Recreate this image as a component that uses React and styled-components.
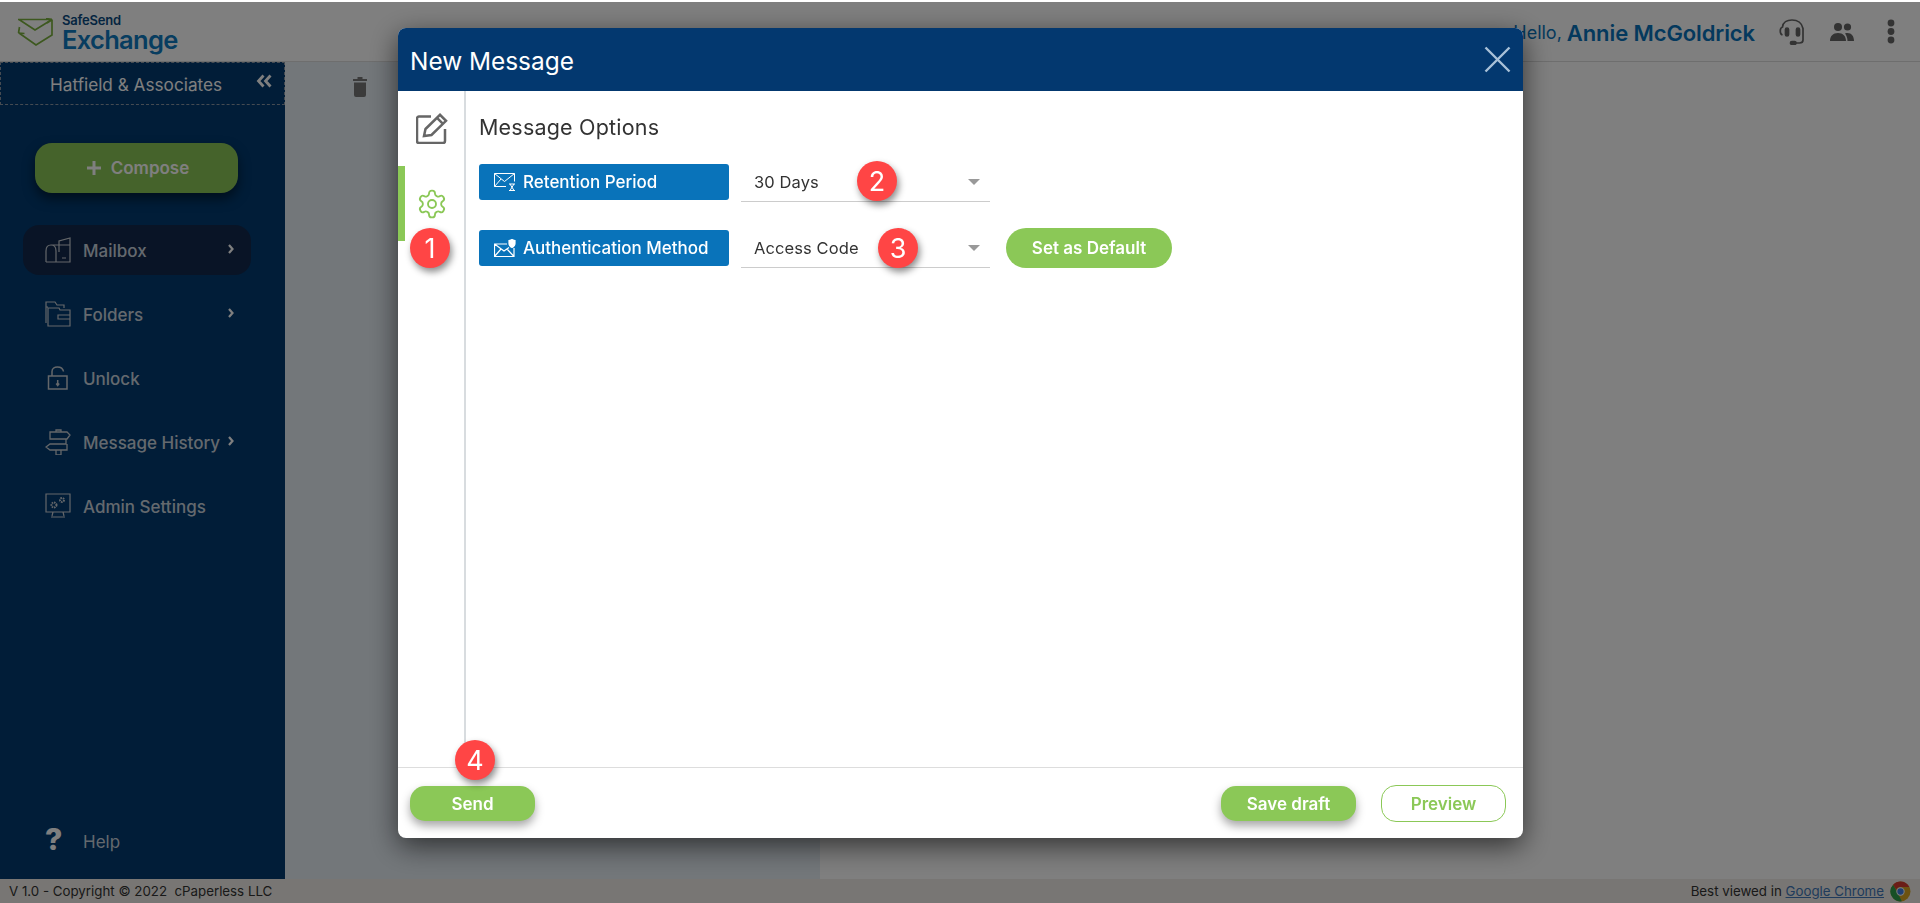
import React from "react";
import styled, { createGlobalStyle } from "styled-components";

const Global = createGlobalStyle`
  html, body { margin: 0; padding: 0; height: 100%; }
  body { font-family: "Inter", "Open Sans", sans-serif; background: #fff; overflow: hidden; }
  #root { height: 100%; }
  * { box-sizing: border-box; }
`;

const Page = styled.div`
  height: 903px; display: flex; flex-direction: column; padding-top: 2px;
  background: #fff;
`;
const TopBar = styled.header`
  height: 60px; flex: none; background: #fff; border-bottom: 1px solid #ddd;
  display: flex; align-items: center; justify-content: space-between; padding: 0 25px 0 17px;
`;
const Logo = styled.div`display: flex; align-items: center; gap: 9px;`;
const LogoText = styled.div`display: flex; flex-direction: column; margin-top: 1px;`;
const LogoTop = styled.span`font-size: 13px; font-weight: 600; line-height: 14px; letter-spacing: -.2px; color: #0a4b82;`;
const LogoBottom = styled.span`font-size: 25.5px; font-weight: 600; line-height: 25px; letter-spacing: -.7px; color: #0f7ac0;`;
const UserArea = styled.div`display: flex; align-items: center;`;
const Hello = styled.span`font-size: 18px; color: #0973ba; margin-right: 5px; padding-top: 2px;`;
const UserName = styled.span`font-size: 22px; font-weight: 600; color: #0973ba; margin-right: 24px; letter-spacing: -.1px; padding-top: 2px;`;
const TopIcon = styled.svg`display: block; color: #666; margin-left: ${p => p.$ml || 0}px;`;

const Body = styled.div`flex: 1; display: flex; min-height: 0;`;
const Sidebar = styled.aside`
  width: 285px; flex: none; background: #023a70; display: flex; flex-direction: column;
`;
const OrgBar = styled.div`
  height: 43px; flex: none; border: 1px dashed #8a97a5; display: flex; align-items: center;
  padding: 2px 0 0 49px; color: #fff; font-size: 17.2px; position: relative;
`;
const Collapse = styled.span`position: absolute; right: 12px; top: 11px; display: flex;`;
const Compose = styled.button`
  margin: 38px 47px 0 35px; height: 50px; border: none; border-radius: 17px; background: #8bc656; color: #fff;
  font: 600 17px "Inter", sans-serif; display: flex; align-items: center; justify-content: center; gap: 10px;
  box-shadow: 0 6px 12px rgba(0,0,0,.5); flex: none; padding: 0 0 0 3px;
`;
const Nav = styled.nav`margin-top: 32px; display: flex; flex-direction: column; gap: 14px; padding: 0 34px 0 23px;`;
const NavRow = styled.div`
  height: 50px; border-radius: 16px; display: flex; align-items: center; padding-left: 22px; color: #c9d3dd;
  background: ${p => p.$active ? "#12294d" : "transparent"}; font-size: 17px; font-weight: 500; position: relative;
`;
const NavLabel = styled.span`padding-top: 2px;`;
const NavIcon = styled.svg`width: 26px; height: 26px; flex: none; margin-right: 12px; color: #c9ced4;`;
const NavChevron = styled.svg`position: absolute; right: 10px; top: 14px; color: #fff;`;
const Help = styled.div`
  margin-top: auto; height: 52px; flex: none; padding-left: 45px; display: flex; align-items: flex-start; color: #c9d3dd; font-size: 17px;
`;
const HelpMark = styled.span`font-size: 30px; font-weight: 800; line-height: 24px; width: 38px; color: #fff;`;
const HelpLabel = styled.span`line-height: 20px; margin-top: 5px;`;
const ListPane = styled.section`width: 535px; flex: none; background: #e6eef5; padding: 14px 0 0 68px;`;
const Rest = styled.section`flex: 1; background: #fff;`;
const Footer = styled.footer`
  height: 24px; flex: none; background: #f0ede8; display: flex; align-items: center; justify-content: space-between;
  padding: 0 9px; font-size: 13.3px; color: #333;
`;
const FooterRight = styled.span`display: flex; align-items: center; gap: 6px;`;
const FooterLink = styled.span`color: #4077b8; text-decoration: underline;`;

const Backdrop = styled.div`position: fixed; inset: 2px 0 0 0; background: rgba(0,0,0,.5);`;
const Modal = styled.div`
  position: fixed; left: 398px; top: 28px; width: 1125px; height: 810px; background: #fff; border-radius: 8px;
  box-shadow: 0 8px 28px rgba(0,0,0,.6); display: flex; flex-direction: column;
`;
const ModalHead = styled.div`
  height: 63px; flex: none; background: #03386f; border-radius: 8px 8px 0 0; color: #fff; display: flex;
  align-items: center; justify-content: space-between; padding: 0 12px; font-size: 24.4px; font-weight: 400;
`;
const ModalTitle = styled.span`padding-top: 2px;`;
const ModalMain = styled.div`flex: 1; display: flex; min-height: 0;`;
const Rail = styled.div`width: 68px; flex: none; border-right: 2px solid #d8dcdf; display: flex; flex-direction: column;`;
const RailItem = styled.div`
  height: 75px; flex: none; display: flex; align-items: center; justify-content: center;
  border-left: 7px solid ${p => p.$active ? "#8bc857" : "transparent"}; padding-right: 6px;
`;
const Options = styled.div`flex: 1; padding: 23px 13px;`;
const OptionsTitle = styled.h2`margin: 0 0 24px; font-size: 21.5px; font-weight: 400; color: #333; line-height: 26px; letter-spacing: .2px;`;
const OptionRow = styled.div`display: flex; align-items: flex-start; height: 38px; margin-bottom: 28px;`;
const OptionLabel = styled.div`
  width: 250px; height: 36px; background: #0973ba; border-radius: 3px; color: #fff; font-size: 17px; font-weight: 500;
  display: flex; align-items: center; padding-left: 15px; gap: 7px; flex: none;
`;
const Select = styled.div`
  width: 249px; height: 38px; margin-left: 12px; border-bottom: 1px solid #ccc; display: flex; align-items: center; justify-content: space-between;
  padding: 0 10px 2px 13px; font-size: 16.5px; letter-spacing: .1px; color: #333; flex: none;
`;
const Caret = styled.span`
  width: 0; height: 0; border-left: 6.5px solid transparent; border-right: 6.5px solid transparent; border-top: 6px solid #999;
`;
const DefaultButton = styled.button`
  margin: -2px 0 0 16px; width: 166px; height: 40px; border: none; border-radius: 20px; background: #8bc857; color: #fff;
  font: 600 17px "Inter", sans-serif; padding: 0;
`;
const ModalFoot = styled.div`
  height: 71px; flex: none; border-top: 1px solid #ddd; display: flex; align-items: center; padding: 1px 17px 0 12px; justify-content: space-between;
`;
const FootGroup = styled.div`display: flex; align-items: center; gap: 25px;`;
const FootButton = styled.button`
  width: ${p => p.$w}px; height: ${p => p.$outline ? 37 : 35}px; border-radius: 15px; padding: 0; font: 600 17px "Inter", sans-serif;
  background: ${p => p.$outline ? "#fff" : "#8bc857"}; color: ${p => p.$outline ? "#8bc857" : "#fff"};
  border: ${p => p.$outline ? "1px solid #8bc857" : "none"};
  box-shadow: ${p => p.$outline ? "none" : "0 5px 10px rgba(0,0,0,.35)"};
`;
const Badge = styled.div`
  position: fixed; left: ${p => p.$x - 20}px; top: ${p => p.$y - 20}px; width: 40px; height: 40px; border-radius: 50%;
  background: #ff4545; color: #fff; font-size: 27px; display: flex; align-items: center; justify-content: center;
  box-shadow: 2px 4px 7px rgba(0,0,0,.45);
`;

const s = { fill: "none", stroke: "currentColor", strokeWidth: 1.2 };

const Chevron = () => (
  <NavChevron width="20" height="20" viewBox="0 0 20 20"><path d="M8 6l3.500 4-3.500 4" fill="none" stroke="currentColor" strokeWidth="2.200" /></NavChevron>
);

export default function App() {
  return (
    <Page>
      <Global />
      <TopBar>
        <Logo>
          <svg width="36" height="28" viewBox="0 0 36 28" fill="none" stroke="#7bb13f" strokeWidth="1.700">
            <path d="M1 1.500h34M2 1.500L18 12 35 1.500M35 1.500V17L19 27 2 15" />
            <path d="M29 .5l6 1M30 5l5-3.500M1.500 15l1-6M1.500 15l6 .5" />
          </svg>
          <LogoText>
            <LogoTop>SafeSend</LogoTop>
            <LogoBottom>Exchange</LogoBottom>
          </LogoText>
        </Logo>
        <UserArea>
          <Hello>Hello,</Hello>
          <UserName>Annie McGoldrick</UserName>
          <TopIcon width="26" height="26" viewBox="0 0 26 26" fill="none" stroke="currentColor" strokeWidth="1.700">
            <path d="M3.500 16C.5 15 .5 9 3.500 8 4 3.500 8 1 13 1c5.500 0 10 3 11 8.500V21c0 2-1.500 3-3.500 3H17" />
            <rect x="6.500" y="9" width="3" height="8" rx="1.500" fill="currentColor" />
            <rect x="17.500" y="9" width="3" height="8" rx="1.500" fill="currentColor" />
            <rect x="11.500" y="22.500" width="5.500" height="2.800" rx="1.400" fill="currentColor" />
          </TopIcon>
          <TopIcon $ml={25} width="24" height="19" viewBox="0 0 24 19" fill="currentColor">
            <circle cx="8" cy="5" r="4" /><circle cx="17.500" cy="5" r="3.600" />
            <path d="M0 19c0-5 3-8 8-8s8 3 8 8zM17.500 19c0-3-1-5.500-2.500-7.500 1-.4 1.500-.5 2.500-.5 4 0 6.500 3 6.500 8z" />
          </TopIcon>
          <TopIcon $ml={33} width="8" height="25" viewBox="0 0 8 25" fill="currentColor">
            <circle cx="4" cy="4" r="3.400" /><circle cx="4" cy="12.500" r="3.400" /><circle cx="4" cy="21" r="3.400" />
          </TopIcon>
        </UserArea>
      </TopBar>
      <Body>
        <Sidebar>
          <OrgBar>
            Hatfield &amp; Associates
            <Collapse>
              <svg width="16" height="14" viewBox="0 0 16 14" fill="none" stroke="#fff" strokeWidth="2.800">
                <path d="M7.500 1.500L2.500 7l5 5.500M14.500 1.500L9.500 7l5 5.500" />
              </svg>
            </Collapse>
          </OrgBar>
          <Compose>
            <svg width="14" height="14" viewBox="0 0 14 14"><path d="M7 0v14M0 7h14" stroke="#fff" strokeWidth="3" /></svg>
            Compose
          </Compose>
          <Nav>
            <NavRow $active>
              <NavIcon viewBox="0 0 26 26" {...s}>
                <path d="M1 25V14c0-4 2-6 5-6h8M6 8c3 0 5 2 5 6v11M1 25h24V8h-5M14 15V4l11-3v7h-11M17 21h4" />
              </NavIcon>
              <NavLabel>Mailbox</NavLabel>
              <Chevron />
            </NavRow>
            <NavRow>
              <NavIcon viewBox="0 0 26 26" {...s}>
                <path d="M1 22V1h9l2 3h7v3M1 6h2M3 25V7h11l1 2h10v16zM13 14h12v4H13zM3 7v15" />
              </NavIcon>
              <NavLabel>Folders</NavLabel>
              <Chevron />
            </NavRow>
            <NavRow>
              <NavIcon viewBox="0 0 26 26" {...s} strokeWidth="1.500">
                <path d="M3.500 11h18.500v13H3.500zM7 11V6.500C7 .5 17.500 .5 18.500 6.500M12.700 15v5M11.200 18.500l1.500 2 1.500-2" />
              </NavIcon>
              <NavLabel>Unlock</NavLabel>
            </NavRow>
            <NavRow>
              <NavIcon viewBox="0 0 26 26" {...s} strokeWidth="1.300">
                <path d="M5 3h17l3 3-3 4H5zM21 10v5H5l-4 3 4 3h17v-6M11 3V1h5v2M11 21v5h5v-5" />
              </NavIcon>
              <NavLabel>Message History</NavLabel>
              <Chevron />
            </NavRow>
            <NavRow>
              <NavIcon viewBox="0 0 26 26" {...s}>
                <path d="M1 1h24v18H1zM8 19l-1 4M18 19l1 4M6 24h14" />
                <circle cx="9" cy="12" r="2.500" strokeWidth="2" strokeDasharray="1.500 .8" />
                <circle cx="17" cy="7" r="2" strokeWidth="2" strokeDasharray="1.500 .8" />
              </NavIcon>
              <NavLabel>Admin Settings</NavLabel>
            </NavRow>
          </Nav>
          <Help>
            <HelpMark>?</HelpMark>
            <HelpLabel>Help</HelpLabel>
          </Help>
        </Sidebar>
        <ListPane>
          <svg width="14" height="21" viewBox="0 0 14 21" fill="#777"><path d="M0 3h14v2H0zM4.500 1h5v2h-5zM1 6.500h12V19a2 2 0 0 1-2 2H3a2 2 0 0 1-2-2z" /></svg>
        </ListPane>
        <Rest />
      </Body>
      <Footer>
        <span>V 1.0 - Copyright © 2022 &nbsp;cPaperless LLC</span>
        <FooterRight>
          <span>Best viewed in <FooterLink>Google Chrome</FooterLink></span>
          <svg width="21" height="21" viewBox="0 0 20 20">
            <circle cx="10" cy="10" r="9.500" fill="#d9a520" />
            <path d="M10 .5a9.500 9.500 0 0 1 8.500 5.300H10a4.200 4.200 0 0 0-4 2.700L3 3.500A9.500 9.500 0 0 1 10 .5z" fill="#d63a2f" />
            <path d="M3 3.500l4.800 8.800 3.500 7.100A9.500 9.500 0 0 1 3 3.500z" fill="#2e9e4b" />
            <circle cx="10" cy="10" r="3.500" fill="#3f7fe0" stroke="#fff" />
          </svg>
        </FooterRight>
      </Footer>
      <Backdrop />
      <Modal>
        <ModalHead>
          <ModalTitle>New Message</ModalTitle>
          <svg width="27" height="27" viewBox="0 0 27 27" stroke="#a9c1d8" strokeWidth="2.400"><path d="M1.500 1.500l24 24M25.500 1.500l-24 24" /></svg>
        </ModalHead>
        <ModalMain>
          <Rail>
            <RailItem>
              <svg width="32" height="31" viewBox="0 0 32 31" fill="none" stroke="#666" strokeWidth="2.500">
                <path d="M15 3.500H3a2 2 0 0 0-2 2v22.500a2 2 0 0 0 2 2h24a2 2 0 0 0 2-2V16" />
                <path d="M8 23l1.500-7L24 1.800l6 6L15.500 22zM21 4.800l6 6" />
              </svg>
            </RailItem>
            <RailItem $active>
              <svg width="32" height="32" viewBox="0 0 24 24" fill="none" stroke="#8bc857" strokeWidth="1.400" strokeLinecap="round" strokeLinejoin="round">
                <path d="M12.220 2h-.44a2 2 0 0 0-2 2v.180a2 2 0 0 1-1 1.730l-.43.250a2 2 0 0 1-2 0l-.150-.080a2 2 0 0 0-2.730.730l-.220.380a2 2 0 0 0 .730 2.730l.150.100a2 2 0 0 1 1 1.720v.510a2 2 0 0 1-1 1.740l-.150.090a2 2 0 0 0-.730 2.730l.220.380a2 2 0 0 0 2.730.730l.150-.080a2 2 0 0 1 2 0l.430.250a2 2 0 0 1 1 1.730V20a2 2 0 0 0 2 2h.440a2 2 0 0 0 2-2v-.180a2 2 0 0 1 1-1.730l.430-.250a2 2 0 0 1 2 0l.150.080a2 2 0 0 0 2.730-.730l.220-.390a2 2 0 0 0-.730-2.730l-.150-.080a2 2 0 0 1-1-1.740v-.500a2 2 0 0 1 1-1.740l.150-.090a2 2 0 0 0 .730-2.730l-.220-.380a2 2 0 0 0-2.730-.730l-.150.080a2 2 0 0 1-2 0l-.430-.250a2 2 0 0 1-1-1.730V4a2 2 0 0 0-2-2z" />
                <circle cx="12" cy="12" r="3" />
              </svg>
            </RailItem>
          </Rail>
          <Options>
            <OptionsTitle>Message Options</OptionsTitle>
            <OptionRow>
              <OptionLabel>
                <svg width="22" height="18" viewBox="0 0 22 18" fill="none" stroke="#fff" strokeWidth="1">
                  <path d="M12 13.500H.5V.5h20v8M.5.5l10 8 10-8M.5 13.500L7 6M15 11h6M15 17.500h6M16 11l4 6.500M20 11l-4 6.500" />
                </svg>
                Retention Period
              </OptionLabel>
              <Select>30 Days<Caret /></Select>
            </OptionRow>
            <OptionRow>
              <OptionLabel>
                <svg width="22" height="18" viewBox="0 0 22 18" fill="none" stroke="#fff" strokeWidth="1.200">
                  <path d="M13 5H.5v12.500H20V9M.5 5l9.500 7 5-3.500M.5 17.500L7 10M20 17.500L13 10" />
                  <path d="M15 1.500c2 0 3-1 3-1s1 1 3 1v3c0 2-2 3.500-3 4-1-.5-3-2-3-4z" fill="#fff" />
                </svg>
                Authentication Method
              </OptionLabel>
              <Select>Access Code<Caret /></Select>
              <DefaultButton>Set as Default</DefaultButton>
            </OptionRow>
          </Options>
        </ModalMain>
        <ModalFoot>
          <FootButton $w={125}>Send</FootButton>
          <FootGroup>
            <FootButton $w={135}>Save draft</FootButton>
            <FootButton $w={125} $outline>Preview</FootButton>
          </FootGroup>
        </ModalFoot>
      </Modal>
      <Badge $x={430} $y={248}>1</Badge>
      <Badge $x={877} $y={181}>2</Badge>
      <Badge $x={898} $y={248}>3</Badge>
      <Badge $x={475} $y={760}>4</Badge>
    </Page>
  );
}
